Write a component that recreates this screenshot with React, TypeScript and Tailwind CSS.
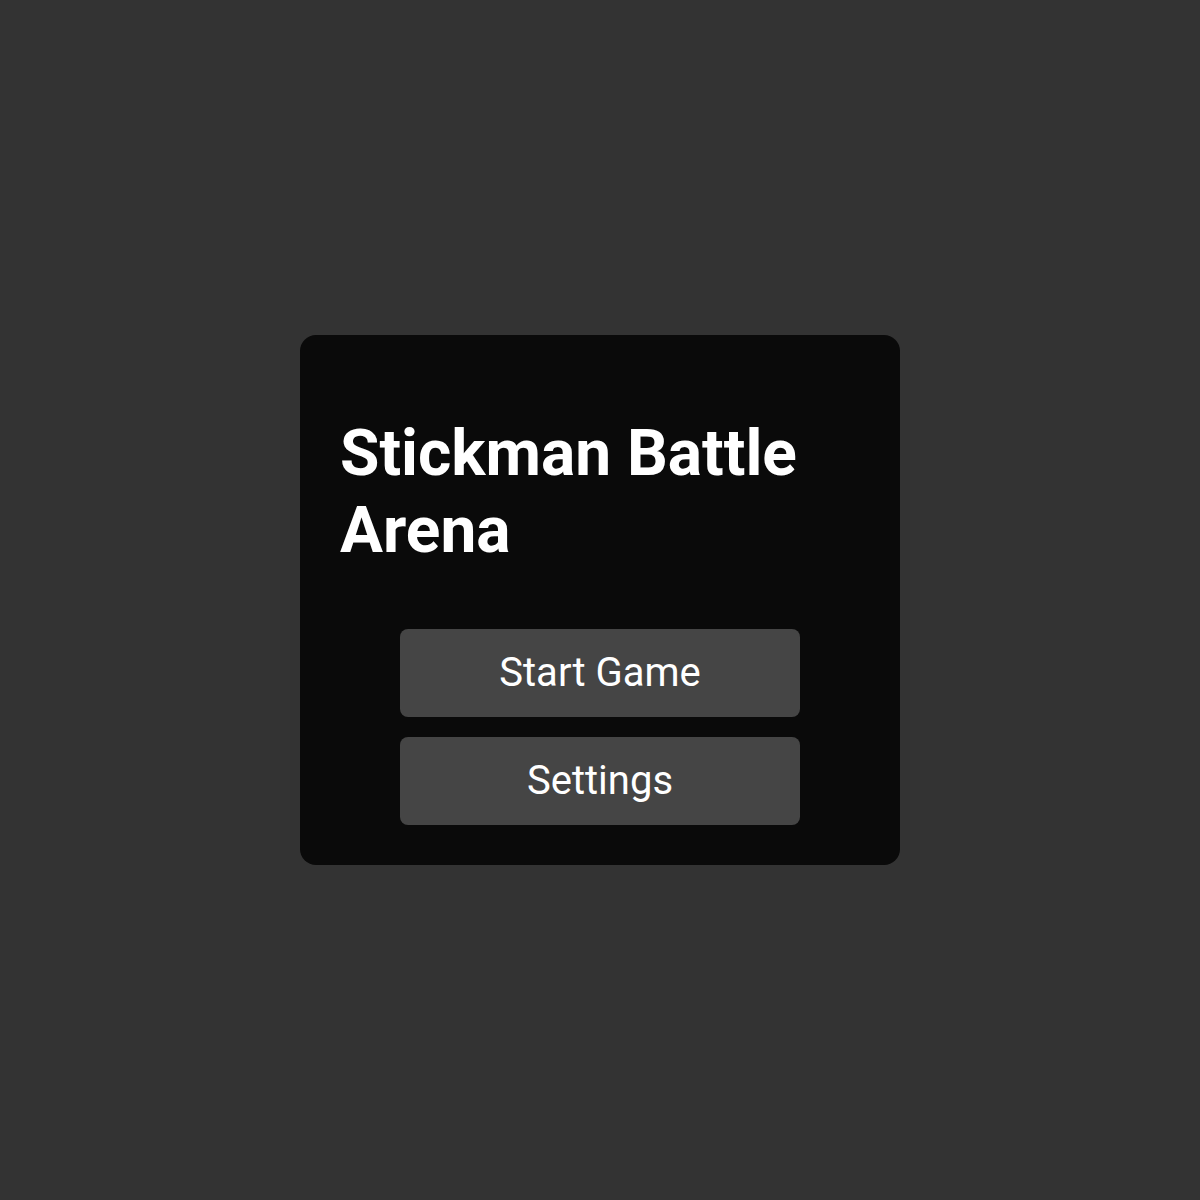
export default function App() {
  return (
    <main className="min-h-screen flex items-center justify-center bg-[#333333] font-['Roboto',sans-serif]">
      <div className="w-[600px] rounded-2xl bg-[#0a0a0a] p-10">
        <h1 className="mt-[41px] text-[64px] leading-[1.2] font-bold text-white">
          Stickman Battle Arena
        </h1>
        <div className="mt-[59px] flex flex-col items-center gap-5">
          <button className="w-[400px] h-[88px] rounded-lg bg-[#454545] text-[40px] text-white">
            Start Game
          </button>
          <button className="w-[400px] h-[88px] rounded-lg bg-[#454545] text-[40px] text-white">
            Settings
          </button>
        </div>
      </div>
    </main>
  );
}
